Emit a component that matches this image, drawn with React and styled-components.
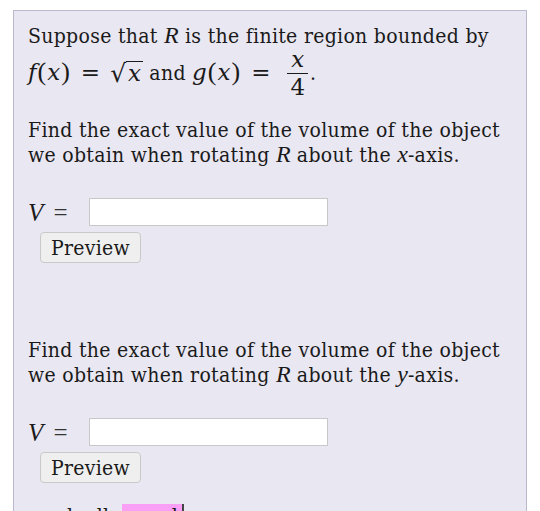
import styled, { createGlobalStyle } from "styled-components";

const GlobalStyle = createGlobalStyle`
  html, body {
    margin: 0;
    padding: 0;
    background: #ffffff;
    overflow: hidden;
  }
`;

const Page = styled.div`
  height: 511px;
  overflow: hidden;
  padding: 10px 13px 0 13px;
  box-sizing: border-box;
`;

const Panel = styled.div`
  background: #e9e7f1;
  border: 1px solid #babace;
  border-bottom: none;
  padding: 13px 14px 40px 14px;
  min-height: 600px;
  font-family: "DejaVu Serif", "Liberation Serif", serif;
  font-stretch: condensed;
  font-size: 21px;
  letter-spacing: 0.3px;
  line-height: 25px;
  color: #1a1a1a;
`;

const Para = styled.p`
  margin: 0 0 ${(p) => p.$gap || 0}px 0;
`;

const M = styled.span`
  font-family: "Liberation Serif", "DejaVu Serif", serif;
  font-style: italic;
  font-size: 24px;
  letter-spacing: 0;
  font-stretch: normal;
  line-height: 20px;
`;

const MathLine = styled.span`
  font-family: "DejaVu Serif", serif;
  font-stretch: normal;
  font-size: 23px;
  letter-spacing: 0;
  line-height: 20px;
`;

const Mi = styled.span`
  font-style: italic;
`;

const Paren = styled.span`
  font-family: "Liberation Serif", serif;
  font-size: 26px;
  padding: 0 1px;
`;

const Op = styled.span`
  font-weight: 300;
  padding: 0 ${(p) => p.$pad ?? 10}px;
`;

const Sqrt = styled.span`
  display: inline-flex;
  align-items: flex-end;
`;

const Radical = styled.span`
  font-size: 25px;
  line-height: 1;
  transform: translateY(2px);
`;

const Radicand = styled.span`
  border-top: 1.3px solid #1a1a1a;
  font-style: italic;
  line-height: 22px;
  padding: 0 2px 0 2px;
`;

const Frac = styled.span`
  display: inline-flex;
  flex-direction: column;
  align-items: center;
  vertical-align: 13px;
  margin: 0 1px 0 6px;
`;

const Num = styled.span`
  font-style: italic;
  line-height: 20px;
  padding: 0 4px 4px 4px;
  border-bottom: 1.3px solid #1a1a1a;
`;

const Den = styled.span`
  line-height: 27px;
  padding: 0 4px;
`;

const Section = styled.div`
  margin-bottom: ${(p) => p.$gap || 0}px;
`;

const AnswerRow = styled.div`
  display: flex;
  align-items: center;
  margin-top: 30px;
`;

const VarLabel = styled.span`
  width: 61px;
  font-family: "Liberation Serif", serif;
  font-stretch: normal;
  font-size: 25px;
  white-space: nowrap;
`;

const Eq = styled.span`
  margin-left: 10px;
  color: #333;
`;

const Input = styled.input`
  width: 239px;
  height: 28px;
  box-sizing: border-box;
  border: 1px solid #c8c8c8;
  background: #fff;
  margin: 0;
`;

const PreviewButton = styled.button`
  display: block;
  margin: 6px 0 0 12px;
  width: 101px;
  height: 31px;
  box-sizing: border-box;
  background: #efefef;
  border: 1px solid #c9c9c9;
  border-radius: 4px;
  font-family: "DejaVu Serif", "Liberation Serif", serif;
  font-stretch: condensed;
  font-size: 21px;
  letter-spacing: 0.3px;
  color: #1a1a1a;
  padding: 0;
`;

const Footer = styled.div`
  margin-top: 21px;
`;

const Highlight = styled.span`
  background: #f9a0f6;
  border-right: 2px solid #444;
  margin-left: 6px;
  padding: 0 4px 0 10px;
`;

function Question({ axis, gap }) {
  return (
    <Section $gap={gap}>
      <Para>
        Find the exact value of the volume of the object we obtain when
        rotating <M>R</M> about the <M>{axis}</M>-axis.
      </Para>
      <AnswerRow>
        <VarLabel>
          <Mi>V</Mi>
          <Eq>=</Eq>
        </VarLabel>
        <Input type="text" />
      </AnswerRow>
      <PreviewButton type="button">Preview</PreviewButton>
    </Section>
  );
}

export default function App() {
  return (
    <Page>
      <GlobalStyle />
      <Panel>
        <Para $gap={17}>
          Suppose that <M>R</M> is the finite region bounded by{" "}
          <MathLine>
            <Mi>f</Mi>
            <Paren>(</Paren>
            <Mi>x</Mi>
            <Paren>)</Paren>
            <Op>=</Op>
            <Sqrt>
              <Radical>√</Radical>
              <Radicand>x</Radicand>
            </Sqrt>
          </MathLine>{" "}
          and{" "}
          <MathLine>
            <Mi>g</Mi>
            <Paren>(</Paren>
            <Mi>x</Mi>
            <Paren>)</Paren>
            <Op>=</Op>
            <Frac>
              <Num>x</Num>
              <Den>4</Den>
            </Frac>
          </MathLine>
          .
        </Para>
        <Question axis="x" gap={75} />
        <Question axis="y" />
        <Footer>
          mark all <Highlight>used</Highlight>
        </Footer>
      </Panel>
    </Page>
  );
}
